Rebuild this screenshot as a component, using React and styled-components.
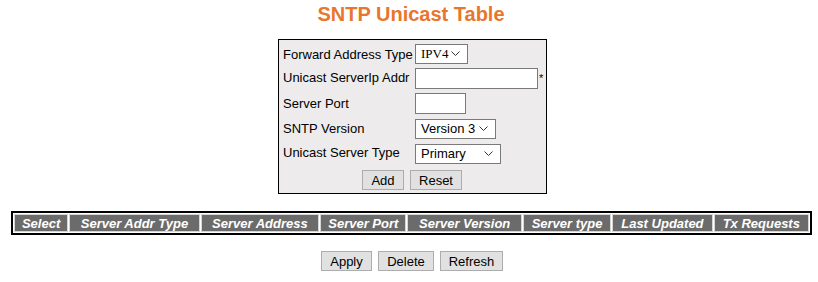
import React, { useState } from "react";
import styled, { createGlobalStyle } from "styled-components";

const GlobalStyle = createGlobalStyle`
  body {
    margin: 0;
    background: #fff;
    font-family: "Liberation Sans", Arial, sans-serif;
    font-size: 13px;
    color: #000;
  }
`;

const chevron =
  "url(\"data:image/svg+xml;utf8,<svg xmlns='http://www.w3.org/2000/svg' width='9' height='5' viewBox='0 0 9 5'><path d='M0.5 0.5 L4.5 4.5 L8.5 0.5' fill='none' stroke='%23333' stroke-width='1'/></svg>\")";

const Page = styled.div`
  width: 818px;
  padding-top: 2px;
`;

const Title = styled.h1`
  margin: 0;
  text-align: center;
  font-size: 20px;
  font-weight: bold;
  color: #e8762d;
  line-height: 24px;
  padding-left: 4px;
`;

const FormBox = styled.form`
  width: 263px;
  margin: 13px 0 0 278px;
  border: 1px solid #000;
  background: #edebeb;
  padding: 3px 0 3px 4px;
`;

const FormGrid = styled.div`
  display: grid;
  grid-template-columns: 132px 1fr;
  row-gap: 4px;
`;

const Label = styled.label`
  line-height: 17px;
  padding-top: ${(p) => p.$top || 0}px;
`;

const Control = styled.div`
  display: flex;
  align-items: center;
  height: 21px;
`;

const Select = styled.select`
  appearance: none;
  width: ${(p) => p.$w}px;
  height: 20px;
  border: 1px solid #7a7a7a;
  background: #fff ${chevron} no-repeat right 7px center;
  font-family: ${(p) =>
    p.$serif ? '"Liberation Serif", "Times New Roman", serif' : '"Liberation Sans", Arial, sans-serif'};
  font-size: 13px;
  padding: 0 0 0 5px;
  color: #000;
  outline: none;
`;

const TextInput = styled.input`
  width: ${(p) => p.$w}px;
  height: 21px;
  box-sizing: border-box;
  border: 1px solid #7a7a7a;
  background: #fff;
  padding: 0 3px;
  font-family: inherit;
  font-size: 13px;
  outline: none;
`;

const Star = styled.span`
  font-size: 11px;
  margin-left: 1px;
  align-self: flex-start;
  margin-top: 4px;
`;

const ButtonRow = styled.div`
  display: flex;
  justify-content: center;
  gap: ${(p) => p.$gap || 6}px;
  padding-left: ${(p) => p.$pl || 0}px;
  padding-right: ${(p) => p.$pr || 0}px;
  margin-top: ${(p) => p.$mt || 0}px;
`;

const Button = styled.button`
  height: 20px;
  width: ${(p) => p.$w}px;
  border: 1px solid #adadad;
  background: #e1e1e1;
  font-family: "Liberation Sans", Arial, sans-serif;
  font-size: 13px;
  color: #000;
  padding: 0;
  cursor: pointer;
`;

const Table = styled.table`
  margin: 17px 0 0 11px;
  width: 801px;
  border: 2px solid #000;
  border-spacing: 1px;
  background: #fff;
`;

const HeadCell = styled.th`
  width: ${(p) => p.$w}px;
  background: #6b6b6b;
  color: #fff;
  font-style: italic;
  font-weight: bold;
  font-size: 13px;
  height: 16px;
  line-height: 15px;
  padding: 0;
  border: 1px solid #d6d6d6;
`;

const columns = [
  ["Select", 52],
  ["Server Addr Type", 128],
  ["Server Address", 116],
  ["Server Port", 84],
  ["Server Version", 112],
  ["Server type", 86],
  ["Last Updated", 98],
  ["Tx Requests", 93],
];

export default function App() {
  const [addrType, setAddrType] = useState("IPV4");
  const [version, setVersion] = useState("3");
  const [serverType, setServerType] = useState("primary");

  return (
    <Page>
      <GlobalStyle />
      <Title>SNTP Unicast Table</Title>

      <FormBox onSubmit={(e) => e.preventDefault()}>
        <FormGrid>
          <Label $top={3}>Forward Address Type</Label>
          <Control>
            <Select $w={53} $serif value={addrType} onChange={(e) => setAddrType(e.target.value)}>
              <option value="IPV4">IPV4</option>
              <option value="IPV6">IPV6</option>
            </Select>
          </Control>

          <Label $top={1}>Unicast ServerIp Addr</Label>
          <Control>
            <TextInput $w={123} />
            <Star>*</Star>
          </Control>

          <Label $top={2}>Server Port</Label>
          <Control>
            <TextInput $w={51} />
          </Control>

          <Label $top={2}>SNTP Version</Label>
          <Control>
            <Select $w={81} value={version} onChange={(e) => setVersion(e.target.value)}>
              <option value="1">Version 1</option>
              <option value="2">Version 2</option>
              <option value="3">Version 3</option>
              <option value="4">Version 4</option>
            </Select>
          </Control>

          <Label $top={1}>Unicast Server Type</Label>
          <Control>
            <Select $w={86} value={serverType} onChange={(e) => setServerType(e.target.value)}>
              <option value="primary">Primary</option>
              <option value="secondary">Secondary</option>
            </Select>
          </Control>
        </FormGrid>
        <ButtonRow $mt={6} $pr={5}>
          <Button $w={42}>Add</Button>
          <Button $w={52} type="reset">Reset</Button>
        </ButtonRow>
      </FormBox>

      <Table>
        <thead>
          <tr>
            {columns.map(([name, w]) => (
              <HeadCell key={name} $w={w}>{name}</HeadCell>
            ))}
          </tr>
        </thead>
      </Table>

      <ButtonRow $mt={16} $gap={6} $pl={6}>
        <Button $w={51}>Apply</Button>
        <Button $w={56}>Delete</Button>
        <Button $w={63}>Refresh</Button>
      </ButtonRow>
    </Page>
  );
}
